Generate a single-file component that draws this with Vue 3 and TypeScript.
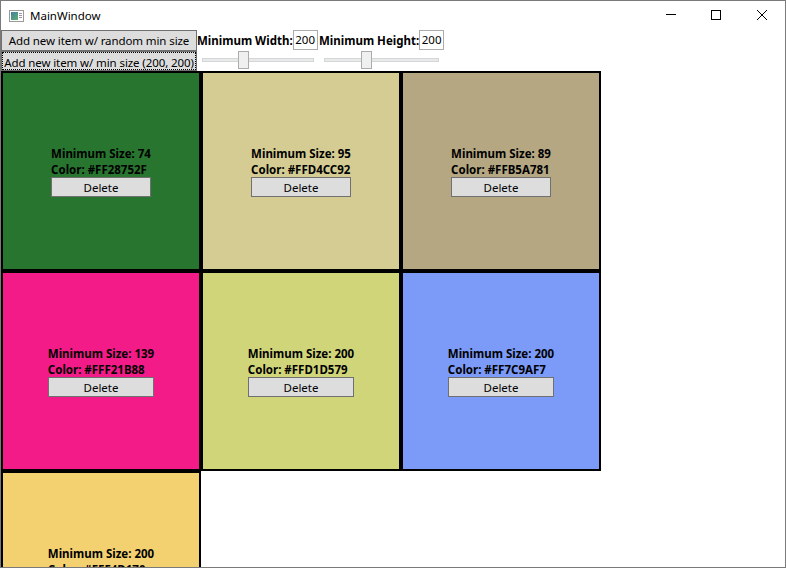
<script setup lang="ts">
interface Tile { size: number; color: string; hex: string }
const tiles: Tile[] = [
  { size: 74, color: '#28752F', hex: '#FF28752F' },
  { size: 95, color: '#D4CC92', hex: '#FFD4CC92' },
  { size: 89, color: '#B5A781', hex: '#FFB5A781' },
  { size: 139, color: '#F21B88', hex: '#FFF21B88' },
  { size: 200, color: '#D1D579', hex: '#FFD1D579' },
  { size: 200, color: '#7C9AF7', hex: '#FF7C9AF7' },
  { size: 200, color: '#F4D170', hex: '#FFF4D170' },
]
</script>

<template>
  <div class="window">
    <header class="titlebar">
      <svg class="app-icon" width="16" height="16" viewBox="0 0 16 16">
        <defs>
          <linearGradient id="iconfill" x1="0" y1="0" x2="1" y2="1">
            <stop offset="0" stop-color="#3f7fa8" />
            <stop offset="1" stop-color="#5fb06a" />
          </linearGradient>
        </defs>
        <rect x="0.5" y="2.5" width="14" height="11" fill="#fff" stroke="#9a9a9a" />
        <rect x="2" y="4" width="7" height="8" fill="url(#iconfill)" />
        <rect x="10" y="5" width="3" height="1" fill="#8f9aa5" />
        <rect x="10" y="7" width="3" height="1" fill="#8f9aa5" />
        <rect x="10" y="9" width="3" height="1" fill="#8f9aa5" />
      </svg>
      <span class="title">MainWindow</span>
      <div class="caption">
        <span class="cap-btn">
          <svg class="glyph" width="10" height="10" viewBox="0 0 10 10"><path d="M1 4.5H11" stroke="#000" fill="none" /></svg>
        </span>
        <span class="cap-btn">
          <svg class="glyph" width="10" height="10" viewBox="0 0 10 10"><rect x="0.5" y="0.5" width="9" height="9" stroke="#000" fill="none" /></svg>
        </span>
        <span class="cap-btn">
          <svg class="glyph" width="10" height="10" viewBox="0 0 10 10"><path d="M0 0L10 10M10 0L0 10" stroke="#000" fill="none" /></svg>
        </span>
      </div>
    </header>
    <section class="toolbar">
      <div class="actions">
        <button class="btn add">Add new item w/ random min size</button>
        <button class="btn add focused">Add new item w/ min size (200, 200)</button>
      </div>
      <div class="control">
        <div class="label-row"><b>Minimum Width:</b><span class="num">200</span></div>
        <div class="slider s1"><i class="thumb t1"></i></div>
      </div>
      <div class="control">
        <div class="label-row"><b>Minimum Height:</b><span class="num">200</span></div>
        <div class="slider s2"><i class="thumb t2"></i></div>
      </div>
    </section>
    <main class="tiles">
      <article v-for="t in tiles" :key="t.hex" class="tile" :style="{ background: t.color }">
        <div class="info">
          <div class="line">Minimum Size: {{ t.size }}</div>
          <div class="line">Color: {{ t.hex }}</div>
          <button class="btn del">Delete</button>
        </div>
      </article>
    </main>
  </div>
</template>

<style>
html, body { margin: 0; padding: 0; background: #fff; overflow: hidden; }
</style>

<style scoped>
.window {
  width: 786px;
  height: 568px;
  box-sizing: border-box;
  border: 1px solid #7a7a7a;
  background: #fff;
  overflow: hidden;
  font-family: "Noto Sans", "Open Sans", sans-serif;
  font-size: 11.5px;
  color: #000;
}
.titlebar {
  display: flex;
  align-items: center;
  height: 29px;
  padding-left: 8px;
}
.app-icon { margin-right: 5px; }
.title { flex: 1; }
.caption { display: flex; }
.cap-btn {
  width: 46px;
  height: 29px;
  box-sizing: border-box;
  padding-bottom: 1px;
  display: flex;
  align-items: center;
  justify-content: center;
}
.glyph { display: block; overflow: visible; }
.toolbar { display: flex; height: 41px; }
.actions { display: flex; flex-direction: column; width: 196px; }
.btn {
  font: inherit;
  color: #000;
  background: #ddd;
  border: 1px solid #707070;
  padding: 0;
  margin: 0;
  box-sizing: border-box;
  white-space: nowrap;
}
.add { height: 21px; width: 196px; letter-spacing: -0.1px; }
.add.focused { height: 20px; outline: 1px dotted #000; outline-offset: -2px; line-height: 20px; padding-top: 1px; }
.control { width: 122px; }
.label-row { display: flex; align-items: center; height: 20px; white-space: nowrap; }
.label-row b { font-weight: 700; }
.num {
  flex: none;
  border: 1px solid #ababab;
  height: 20px;
  width: 25px;
  box-sizing: border-box;
  text-align: center;
  line-height: 18px;
}
.slider {
  position: relative;
  height: 4px;
  background: #e7eaea;
  border: 1px solid #d6d6d6;
  margin-top: 8px;
  margin-left: 5px;
  box-sizing: border-box;
}
.s1 { width: 112px; }
.s2 { width: 115px; }
.thumb {
  position: absolute;
  top: -8px;
  width: 11px;
  height: 18px;
  box-sizing: border-box;
  background: #f0f0f0;
  border: 1px solid #acacac;
}
.t1 { left: 35px; }
.t2 { left: 36px; }
.tiles { display: flex; flex-wrap: wrap; width: 600px; }
.tile {
  width: 200px;
  height: 200px;
  box-sizing: border-box;
  border: 2px solid #000;
  display: flex;
  align-items: center;
  justify-content: center;
}
.info { display: flex; flex-direction: column; }
.line { height: 16px; line-height: 18px; font-weight: 700; white-space: nowrap; }
.del { height: 20px; width: 100%; }
</style>
